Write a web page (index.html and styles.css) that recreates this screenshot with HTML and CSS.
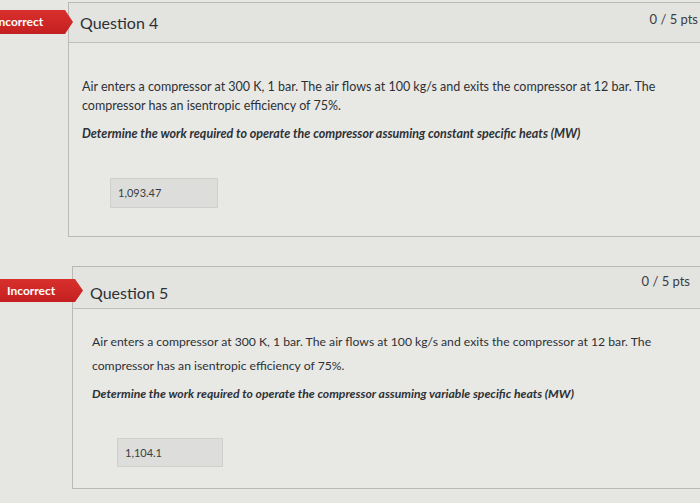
FILE: index.html
```html
<!DOCTYPE html>
<html>
<head>
<meta charset="utf-8">
<link rel="stylesheet" href="styles.css">
</head>
<body>
<div class="quiz">
  <div class="question q4">
    <div class="badge">Incorrect</div>
    <div class="q-header">
      <span class="q-title">Question 4</span>
      <span class="q-pts">0 / 5 pts</span>
    </div>
    <div class="q-body">
      <p class="q-text">Air enters a compressor at 300 K, 1 bar. The air flows at 100 kg/s and exits the compressor at 12 bar. The compressor has an isentropic efficiency of 75%.</p>
      <p class="q-prompt">Determine the work required to operate the compressor assuming constant specific heats (MW)</p>
      <div class="answer">1,093.47</div>
    </div>
  </div>
  <div class="question q5">
    <div class="badge">Incorrect</div>
    <div class="q-header">
      <span class="q-title">Question 5</span>
      <span class="q-pts">0 / 5 pts</span>
    </div>
    <div class="q-body">
      <p class="q-text">Air enters a compressor at 300 K, 1 bar. The air flows at 100 kg/s and exits the compressor at 12 bar. The compressor has an isentropic efficiency of 75%.</p>
      <p class="q-prompt">Determine the work required to operate the compressor assuming variable specific heats (MW)</p>
      <div class="answer">1,104.1</div>
    </div>
  </div>
</div>
</body>
</html>
```
FILE: styles.css
```css
html, body {
  margin: 0;
  padding: 0;
  background: #e6e6e3;
  font-family: Lato, "Open Sans", sans-serif;
  color: #2d3135;
  overflow: hidden;
}
.quiz {
  padding-top: 2px;
}
.question {
  position: relative;
  border: 1px solid #b9b9b7;
  border-right: none;
  background: #e8e8e5;
}
.q4 {
  margin-left: 68px;
}
.q5 {
  margin-top: 29px;
  margin-left: 72px;
}
.badge {
  position: absolute;
  height: 24px;
  line-height: 24px;
  background: linear-gradient(#d8302c, #c41f21);
  color: #fff;
  font-weight: 700;
  font-size: 12px;
  box-sizing: border-box;
  clip-path: polygon(0 0, calc(100% - 8px) 0, 100% 50%, calc(100% - 8px) 100%, 0 100%);
}
.q4 .badge {
  left: -76px;
  top: 7px;
  width: 80px;
  padding-left: 2px;
}
.q5 .badge {
  left: -76px;
  top: 12px;
  width: 86px;
  height: 23px;
  line-height: 23px;
  padding-left: 10px;
}
.q-header {
  display: flex;
  justify-content: space-between;
  border-bottom: 1px solid #bdbdbb;
  background: #e3e3e0;
}
.q4 .q-header {
  height: 39px;
  padding: 0 2px 0 11px;
}
.q5 .q-header {
  height: 41px;
  padding: 0 10px 0 17px;
}
.q-title {
  font-size: 16px;
  align-self: center;
}
.q5 .q-title {
  padding-top: 10px;
}
.q-pts {
  font-size: 13px;
  color: #3a3d40;
}
.q4 .q-pts {
  padding-top: 8px;
}
.q5 .q-pts {
  padding-top: 6px;
}
.q-body p {
  margin: 0;
  font-size: 12.5px;
}
.q4 .q-body {
  padding: 34px 30px 28px 13px;
}
.q4 .q-text {
  line-height: 19px;
}
.q4 .q-prompt {
  margin-top: 9px;
  line-height: 19px;
}
.q5 .q-body {
  padding: 21px 40px 21px 19px;
}
.q5 .q-body p {
  font-size: 12.2px;
}
.q5 .q-text {
  line-height: 24px;
}
.q5 .q-prompt {
  margin-top: 4px;
  line-height: 24px;
}
.q-prompt {
  font-weight: 700;
  font-style: italic;
}
.answer {
  box-sizing: border-box;
  width: 108px;
  height: 30px;
  border: 1px solid #cfcfcc;
  background: #dddddb;
  font-size: 11px;
  line-height: 28px;
  padding-left: 7px;
  color: #3a3d40;
}
.q4 .answer {
  margin: 35px 0 0 28px;
}
.q5 .answer {
  margin: 32px 0 0 25px;
  width: 106px;
  height: 29px;
}
```
